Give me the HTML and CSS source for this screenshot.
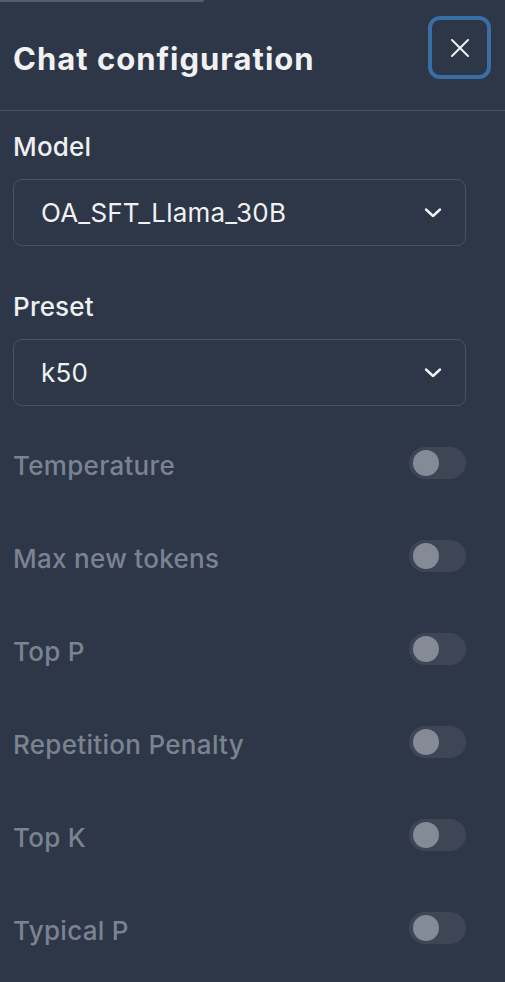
FILE: index.html
```html
<!DOCTYPE html>
<html lang="en">

<head>
  <meta charset="UTF-8" />
  <meta name="viewport" content="width=device-width, initial-scale=1" />
  <title>Chat configuration</title>
  <link rel="stylesheet" href="styles.css">
</head>

<body>
  <div class="top-edge"></div>

  <header class="drawer-header">
    <h2>Chat configuration</h2>
    <button class="close-btn" aria-label="Close">
      <svg width="20" height="20" viewBox="0 0 20 20">
        <path d="M2 2 L18 18 M18 2 L2 18" stroke="#f2f2f4" stroke-width="2" stroke-linecap="round" />
      </svg>
    </button>
  </header>

  <div class="drawer-body">
    <div class="field">
      <label class="field-label">Model</label>
      <div class="select">
        <span>OA_SFT_Llama_30B</span>
        <svg class="chevron" width="18" height="12" viewBox="0 0 18 12">
          <path d="M2 2.5 L9 9 L16 2.5" fill="none" stroke="#f2f2f4" stroke-width="2.4" stroke-linecap="round" stroke-linejoin="round" />
        </svg>
      </div>
    </div>

    <div class="field">
      <label class="field-label">Preset</label>
      <div class="select">
        <span>k50</span>
        <svg class="chevron" width="18" height="12" viewBox="0 0 18 12">
          <path d="M2 2.5 L9 9 L16 2.5" fill="none" stroke="#f2f2f4" stroke-width="2.4" stroke-linecap="round" stroke-linejoin="round" />
        </svg>
      </div>
    </div>

    <div class="toggles">
      <div class="toggle-row"><span>Temperature</span><span class="switch"></span></div>
      <div class="toggle-row"><span>Max new tokens</span><span class="switch"></span></div>
      <div class="toggle-row"><span>Top P</span><span class="switch"></span></div>
      <div class="toggle-row"><span>Repetition Penalty</span><span class="switch"></span></div>
      <div class="toggle-row"><span>Top K</span><span class="switch"></span></div>
      <div class="toggle-row"><span>Typical P</span><span class="switch"></span></div>
    </div>
  </div>
</body>

</html>
```

FILE: styles.css
```css
body {
  font-family: Inter, "Noto Sans", sans-serif;
  background-color: #2d3748;
  color: #eef0f2;
  margin: 0;
  height: 982px;
  overflow: hidden;
}

.top-edge {
  width: 204px;
  height: 2px;
  background-color: #585e6c;
  border-bottom-right-radius: 3px;
}

.drawer-header {
  display: flex;
  justify-content: space-between;
  align-items: flex-start;
  height: 108px;
  border-bottom: 1px solid #4a5160;
}

.drawer-header h2 {
  margin: 39px 0 0 13px;
  font-size: 31px;
  font-weight: 700;
  letter-spacing: 1px;
  line-height: 36px;
  color: #f1f1f3;
}

.close-btn {
  width: 63px;
  height: 63px;
  margin: 14px 14px 0 0;
  background: transparent;
  border: 4px solid #3a6ea6;
  border-radius: 12px;
  display: flex;
  align-items: center;
  justify-content: center;
  padding: 0;
}

.drawer-body {
  padding: 0 39px 0 13px;
}

.field {
  padding-top: 18px;
}

.field + .field {
  padding-top: 43px;
}

.field-label {
  display: block;
  font-size: 26px;
  font-weight: 500;
  letter-spacing: 0.2px;
  line-height: 36px;
  color: #eef0f2;
}

.select {
  margin-top: 14px;
  height: 67px;
  box-sizing: border-box;
  border: 1px solid #4a5262;
  border-radius: 9px;
  display: flex;
  align-items: center;
  justify-content: space-between;
  padding: 0 23px 0 27px;
  font-size: 26px;
  letter-spacing: 0.2px;
  color: #f0f1f3;
}

.toggles {
  margin-top: 10px;
}

.toggle-row {
  height: 93px;
  display: flex;
  align-items: center;
  justify-content: space-between;
  font-size: 26px;
  font-weight: 500;
  letter-spacing: 0.3px;
  color: #7c8390;
}

.toggle-row span:first-child {
  padding-top: 6px;
}

.switch {
  width: 57px;
  height: 32px;
  border-radius: 16px;
  background-color: #3e4656;
  position: relative;
}

.switch::after {
  content: "";
  position: absolute;
  left: 4px;
  top: 3px;
  width: 26px;
  height: 26px;
  border-radius: 50%;
  background-color: #848b96;
}
```
